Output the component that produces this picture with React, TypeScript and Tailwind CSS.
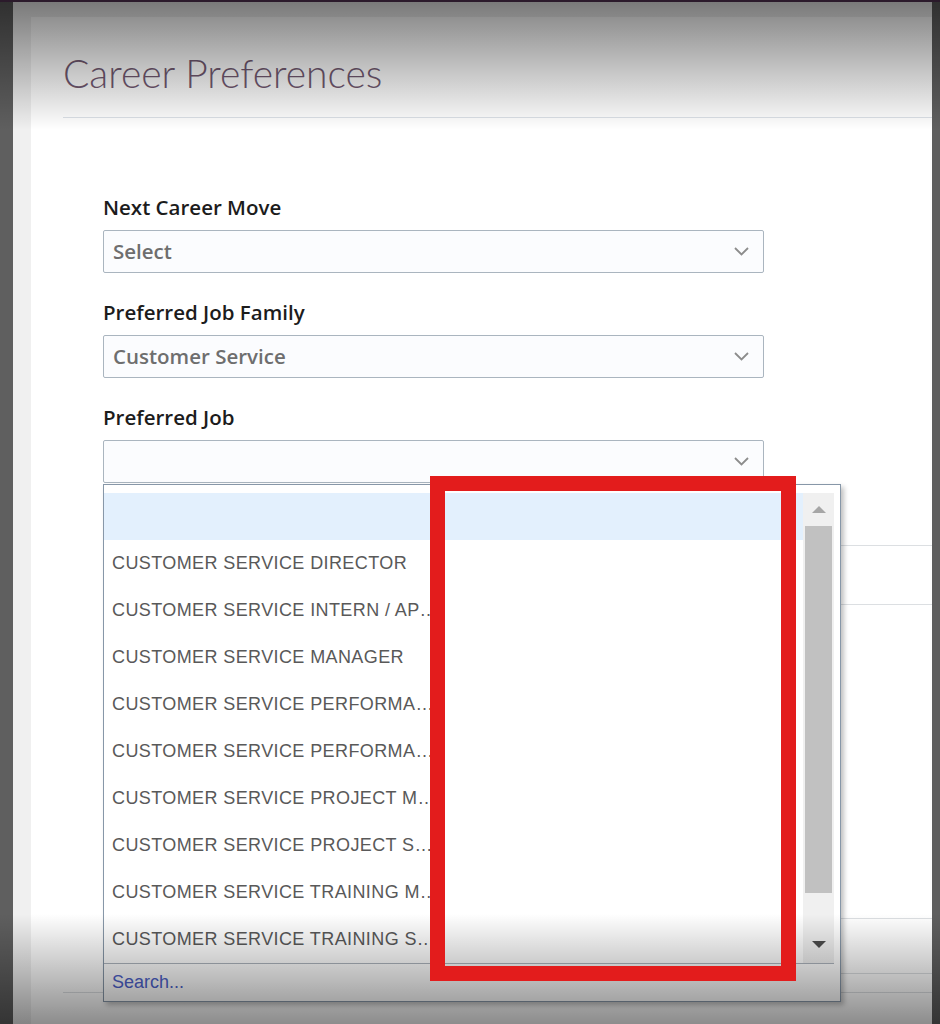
const jobs = [
  "CUSTOMER SERVICE DIRECTOR",
  "CUSTOMER SERVICE INTERN / APPRENTICE",
  "CUSTOMER SERVICE MANAGER",
  "CUSTOMER SERVICE PERFORMANCE ANALYST",
  "CUSTOMER SERVICE PERFORMANCE MANAGER",
  "CUSTOMER SERVICE PROJECT MANAGER",
  "CUSTOMER SERVICE PROJECT SPECIALIST",
  "CUSTOMER SERVICE TRAINING MANAGER",
  "CUSTOMER SERVICE TRAINING SPECIALIST",
];

function Chevron() {
  return (
    <svg width="15" height="9" viewBox="0 0 15 9" fill="none" className="shrink-0">
      <path d="M1 1l6.5 6.5L14 1" stroke="#8c8c8c" strokeWidth="1.8" />
    </svg>
  );
}

function Field({ label, value, children }: { label: string; value?: string; children?: React.ReactNode }) {
  return (
    <div className="relative w-[661px]">
      <p className="text-[20.5px] leading-[28px] font-semibold text-[#1c1c1c] mb-[9px]">{label}</p>
      <div className="h-[43px] border border-[#aab5bf] rounded-[2px] bg-[#fbfcfe] flex items-center justify-between pl-[9px] pr-[14px]">
        <span className="text-[20.5px] font-semibold text-[#6e6e6e]">{value}</span>
        <Chevron />
      </div>
      {children}
    </div>
  );
}

function JobDropdown() {
  return (
    <div className="absolute left-0 top-[81px] w-[738px] bg-white border border-[#8797a8] shadow-[3px_3px_5px_rgba(0,0,0,0.25)] z-10 font-['Liberation_Sans',Arial,sans-serif]">
      <div className="flex pt-[8px] pr-[6px]">
        <ul className="flex-1">
          <li className="h-[47px] bg-[#e3f0fd]" />
          {jobs.map((job) => (
            <li key={job} className="h-[47px] flex items-center pl-[8px]">
              <span className="block max-w-[328px] truncate text-[18px] tracking-[0.4px] text-[#595959]">{job}</span>
            </li>
          ))}
        </ul>
        {/* scrollbar */}
        <div className="w-[31px] h-[470px] bg-[#f0f0f0] flex flex-col">
          <div className="h-[33px] flex items-center justify-center">
            <div className="w-0 h-0 border-x-[7px] border-x-transparent border-b-[7px] border-b-[#a6a6a6]" />
          </div>
          <div className="mx-[2px] h-[367px] bg-[#c1c1c1]" />
          <div className="flex-1 flex items-end justify-center pb-[15px]">
            <div className="w-0 h-0 border-x-[7px] border-x-transparent border-t-[7px] border-t-[#4d4d4d]" />
          </div>
        </div>
      </div>
      <div className="mr-[6px] border-t border-[#aeb6bf] h-[38px] flex items-center pl-[8px]">
        <span className="text-[18px] text-[#4d62cc]">Search...</span>
      </div>
    </div>
  );
}

export default function App() {
  return (
    <div className="relative w-[940px] h-[1024px] overflow-hidden bg-[#5f5f5f] flex font-['Open_Sans',sans-serif]">
      <div className="w-[13px] shrink-0" />
      <div className="w-[919px] shrink-0 bg-[#f0f0f0] pt-[17px] pl-[18px] flex">
        <div className="flex-1 bg-white pl-[32px] pt-[32px]">
          <h1 className="font-['Lato',sans-serif] font-light text-[39px] leading-[48px] text-[#735a72] pb-[20px] border-b border-[#dde2e8]">
            Career Preferences
          </h1>

          <div className="ml-[40px] mt-[75px] flex flex-col gap-[25px]">
            <Field label="Next Career Move" value="Select" />
            <Field label="Preferred Job Family" value="Customer Service" />
            <Field label="Preferred Job">
              <JobDropdown />
            </Field>
          </div>

          {/* content behind the open list */}
          <div className="ml-[40px] mt-[62px] h-[60px] border-y border-[#dcdfe2]" />
          <div className="ml-[40px] mt-[313px] h-[56px] border-y border-[#dcdfe2]" />
          <div className="mt-[18px] border-t border-[#dcdfe2]" />
        </div>
      </div>

      {/* video vignette */}
      <div className="absolute inset-x-0 top-0 h-[130px] bg-gradient-to-b from-black/50 to-transparent pointer-events-none z-20" />
      <div className="absolute inset-x-0 bottom-0 h-[110px] bg-gradient-to-t from-black/45 to-transparent pointer-events-none z-20" />
      <div className="absolute inset-x-0 top-0 h-[2px] bg-[#2b1a2b] z-20" />

      {/* annotation */}
      <div className="absolute left-[430px] top-[476px] w-[366px] h-[505px] border-[15px] border-[#e31c1c] z-30" />
    </div>
  );
}
